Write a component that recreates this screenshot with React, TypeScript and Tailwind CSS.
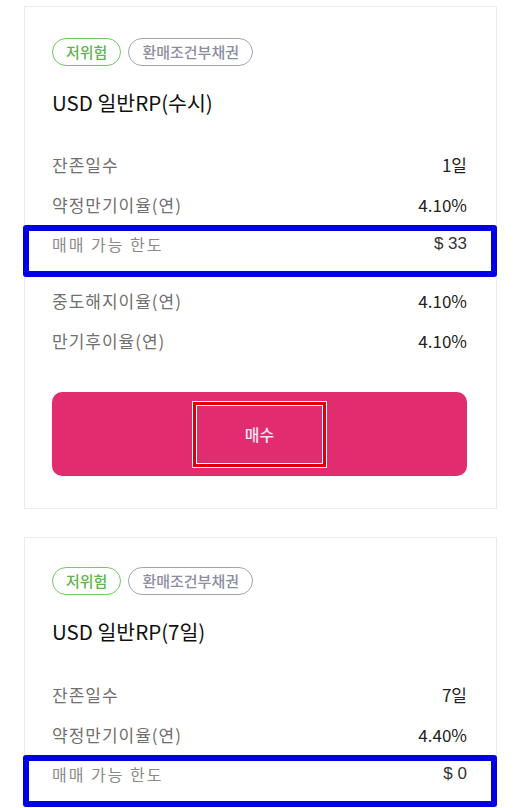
import React from "react";

type Row = { label: string; value: string; highlight?: boolean };

interface Product {
  title: string;
  rows: Row[];
}

const products: Product[] = [
  {
    title: "USD 일반RP(수시)",
    rows: [
      { label: "잔존일수", value: "1일" },
      { label: "약정만기이율(연)", value: "4.10%" },
      { label: "매매 가능 한도", value: "$ 33", highlight: true },
      { label: "중도해지이율(연)", value: "4.10%" },
      { label: "만기후이율(연)", value: "4.10%" },
    ],
  },
  {
    title: "USD 일반RP(7일)",
    rows: [
      { label: "잔존일수", value: "7일" },
      { label: "약정만기이율(연)", value: "4.40%" },
      { label: "매매 가능 한도", value: "$ 0", highlight: true },
      { label: "중도해지이율(연)", value: "4.40%" },
      { label: "만기후이율(연)", value: "4.40%" },
    ],
  },
];

function InfoRow({ row }: { row: Row }) {
  if (row.highlight) {
    // annotated row (blue frame)
    return (
      <div className="-ml-[29px] -mr-[30px] mb-[4px] flex h-[52px] items-start justify-between rounded-[3px] border-[6px] border-[#0000e4] pl-[23px] pr-[24px] pt-[1px]">
        <span className="text-[16px] leading-[24px] tracking-[2px] text-[#8a8a8a]">{row.label}</span>
        <span className="text-[17px] leading-[24px] text-[#333]" style={{ fontFamily: '"Liberation Sans", Arial, sans-serif' }}>
          {row.value}
        </span>
      </div>
    );
  }
  return (
    <div className="flex h-[40px] items-center justify-between">
      <span className="text-[17px] tracking-[1px] text-[#707070]">{row.label}</span>
      <span className="text-[17px] text-[#222]">{row.value}</span>
    </div>
  );
}

function ProductCard({ product, compact }: { product: Product; compact?: boolean }) {
  return (
    <div className={`border border-[#ebebeb] bg-white pb-[32px] pl-[27px] pr-[29px] ${compact ? "pt-[29px]" : "pt-[31px]"}`}>
      {/* Badges */}
      <div className="flex gap-[7px]">
        <span className="flex h-[28px] items-center rounded-full border-[1.5px] border-[#72c862] px-[13px] text-[15px] font-medium text-[#5db54c]">
          저위험
        </span>
        <span className="flex h-[28px] items-center rounded-full border-[1.5px] border-[#a3a4b8] px-[13px] text-[15px] font-medium text-[#8c8da0]">
          환매조건부채권
        </span>
      </div>

      <h2 className="mt-[21px] text-[20.5px] leading-[30px] text-[#111]">{product.title}</h2>

      <div className={compact ? "mt-[29px]" : "mt-[28px]"}>
        {product.rows.map((row) => (
          <InfoRow key={row.label} row={row} />
        ))}
      </div>

      <button className="mt-[31px] flex h-[84px] w-full items-center justify-center rounded-[10px] bg-[#e12d6f]">
        <span className="flex h-[65px] w-[133px] items-center justify-center border-[3px] border-[#e00000] text-[16px] font-medium text-[#fbe4ee] shadow-[inset_0_0_0_1px_#ffffff] outline outline-1 outline-white">
          매수
        </span>
      </button>
    </div>
  );
}

export default function App() {
  return (
    <div
      className="h-[808px] overflow-hidden bg-white pl-[24px] pr-[23px] pt-[6px]"
      style={{ fontFamily: '"Noto Sans CJK KR", "Noto Sans", sans-serif' }}
    >
      <div className="flex flex-col gap-[28px]">
        {products.map((p, i) => (
          <ProductCard key={p.title} product={p} compact={i > 0} />
        ))}
      </div>
    </div>
  );
}
